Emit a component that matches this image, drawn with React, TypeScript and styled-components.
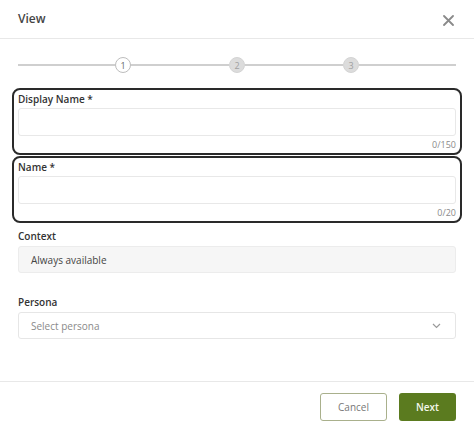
import { FC } from 'react';
import styled, { createGlobalStyle } from 'styled-components';

const Global = createGlobalStyle`
  html, body {
    margin: 0;
    padding: 0;
    background: #fff;
  }
  body {
    font-family: 'Open Sans', 'Noto Sans', sans-serif;
    color: #333;
  }
  * {
    box-sizing: border-box;
  }
`;

interface IFieldProps {
  label: string;
  max: number;
}

const BoxedField: FC<IFieldProps> = ({ label, max }) => (
  <S.box>
    <S.label>{label}</S.label>
    <S.input />
    <S.counter>0/{max}</S.counter>
  </S.box>
);

const App: FC = () => {
  return (
    <>
      <Global />
      <S.page>
        <S.header>
          <S.title>View</S.title>
          <S.close aria-label="close">
            <svg width="11" height="11" viewBox="0 0 11 11">
              <path d="M1 1L10 10M10 1L1 10" stroke="#8a8a8a" strokeWidth="1.8" strokeLinecap="round" />
            </svg>
          </S.close>
        </S.header>

        <S.main>
          <S.stepper>
            <S.line />
            <S.step active>1</S.step>
            <S.line fixed />
            <S.step>2</S.step>
            <S.line fixed />
            <S.step>3</S.step>
            <S.line />
          </S.stepper>

          <BoxedField label="Display Name *" max={150} />
          <S.gap />
          <BoxedField label="Name *" max={20} />

          <S.group>
            <S.label>Context</S.label>
            <S.readonly>Always available</S.readonly>
          </S.group>

          <S.group spaced>
            <S.label>Persona</S.label>
            <S.select>
              <span>Select persona</span>
              <svg width="9" height="6" viewBox="0 0 9 6">
                <path d="M1 1L4.5 4.5L8 1" fill="none" stroke="#9a9a9a" strokeWidth="1.2" />
              </svg>
            </S.select>
          </S.group>
        </S.main>

        <S.footer>
          <S.cancel>Cancel</S.cancel>
          <S.next>Next</S.next>
        </S.footer>
      </S.page>
    </>
  );
};

const S = {
  page: styled.div`
    width: 474px;
    height: 433px;
    display: flex;
    flex-direction: column;
    overflow: hidden;
  `,

  header: styled.div`
    height: 39px;
    padding: 0 18px;
    display: flex;
    align-items: center;
    justify-content: space-between;
    border-bottom: 1px solid #e8e8e8;
  `,

  title: styled.div`
    font-size: 12px;
    font-weight: 600;
    color: #444;
    margin-top: -1px;
  `,

  close: styled.div`
    display: flex;
    margin-right: 2px;
    margin-top: 3px;
  `,

  main: styled.div`
    flex: 1;
  `,

  stepper: styled.div`
    display: flex;
    align-items: center;
    padding: 18px 18px 15px;
  `,

  line: styled.div<{ fixed?: boolean }>`
    height: 1.5px;
    background: #cfcfcf;
    flex: ${(p) => (p.fixed ? '0 0 98px' : '1')};
  `,

  step: styled.div<{ active?: boolean }>`
    width: 16px;
    height: 16px;
    border-radius: 50%;
    display: flex;
    align-items: center;
    justify-content: center;
    font-size: 9px;
    line-height: 1;
    background: ${(p) => (p.active ? '#fff' : '#dcdcdc')};
    border: 1px solid ${(p) => (p.active ? '#bdbdbd' : '#d4d4d4')};
    color: ${(p) => (p.active ? '#666' : '#a0a0a0')};
  `,

  box: styled.div`
    margin: 0 12px;
    border: 2px solid #2a2a2a;
    border-radius: 8px;
    padding: 1px 4px 2px;
  `,

  gap: styled.div`
    height: 1px;
  `,

  label: styled.div`
    font-size: 10px;
    font-weight: 600;
    line-height: 16px;
    color: #333;
  `,

  input: styled.div`
    margin-top: 1px;
    height: 28px;
    border: 1px solid #e8e8e8;
    border-radius: 3px;
    background: #fff;
  `,

  counter: styled.div`
    padding-top: 2px;
    font-size: 9px;
    line-height: 13px;
    color: #8a8a8a;
    text-align: right;
  `,

  group: styled.div<{ spaced?: boolean }>`
    padding: 0 18px;
    margin-top: ${(p) => (p.spaced ? '21px' : '5px')};
  `,

  readonly: styled.div`
    margin-top: 2px;
    height: 27px;
    border: 1px solid #ececec;
    border-radius: 3px;
    background: #f6f6f6;
    display: flex;
    align-items: center;
    padding-left: 12px;
    font-size: 10px;
    color: #444;
  `,

  select: styled.div`
    margin-top: 2px;
    height: 27px;
    border: 1px solid #e6e6e6;
    border-radius: 3px;
    background: #fff;
    display: flex;
    align-items: center;
    justify-content: space-between;
    padding: 0 14px 0 12px;
    font-size: 10px;
    color: #8a8a8a;
  `,

  footer: styled.div`
    height: 52px;
    border-top: 1px solid #e8e8e8;
    padding: 11px 18px 12px;
    display: flex;
    justify-content: flex-end;
    gap: 12px;
  `,

  cancel: styled.button`
    width: 67px;
    height: 28px;
    border: 1px solid #a9b08c;
    border-radius: 3px;
    background: #fff;
    font-family: inherit;
    font-size: 10px;
    color: #777;
    padding: 0;
  `,

  next: styled.button`
    width: 57px;
    height: 28px;
    border: none;
    border-radius: 3px;
    background: #5b7b1f;
    font-family: inherit;
    font-size: 10px;
    font-weight: 600;
    color: #f4f7ea;
    padding: 0;
  `,
};

export default App;
